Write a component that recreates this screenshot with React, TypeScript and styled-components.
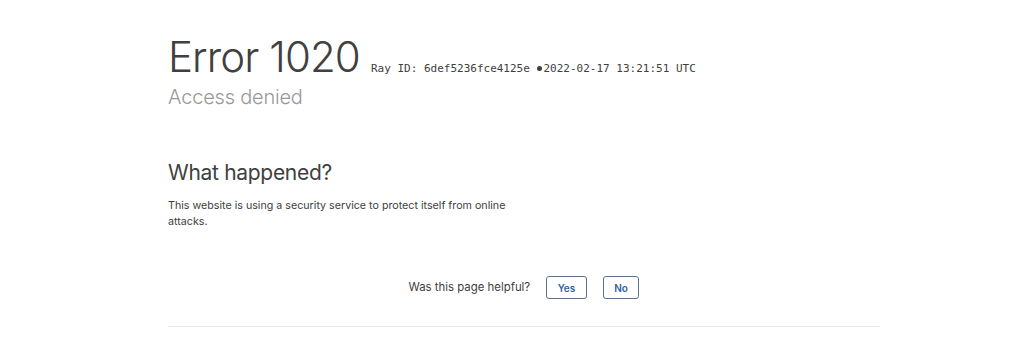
import React from 'react';
import styled, { createGlobalStyle } from 'styled-components';

const GlobalStyle = createGlobalStyle`
  html, body {
    margin: 0;
    padding: 0;
    background: #ffffff;
  }
  body {
    font-family: Inter, "Noto Sans", "Liberation Sans", sans-serif;
    color: #404040;
  }
`;

const ErrorPage = () => {
  return (
    <Page>
      <GlobalStyle />
      {/* header */}
      <Header>
        <TitleRow>
          <Title>Error 1020</Title>
          <RayInfo>
            Ray ID: 6def5236fce4125e <Dot />2022-02-17 13:21:51 UTC
          </RayInfo>
        </TitleRow>
        <Subtitle>Access denied</Subtitle>
      </Header>

      {/* details */}
      <Section>
        <SectionTitle>What happened?</SectionTitle>
        <Columns>
          <Column>
            <BodyText>
              This website is using a security service to protect itself from online attacks.
            </BodyText>
          </Column>
          <Column />
        </Columns>
      </Section>

      {/* feedback */}
      <Feedback>
        <FeedbackLabel>Was this page helpful?</FeedbackLabel>
        <FeedbackButton>Yes</FeedbackButton>
        <FeedbackButton>No</FeedbackButton>
      </Feedback>
      <Divider />
    </Page>
  );
};

export default ErrorPage;

const Page = styled.div`
  width: 712px;
  margin-left: 168px;
  padding-top: 36px;
`;

const Header = styled.header`
  display: flex;
  flex-direction: column;
  gap: 7px;
`;

const TitleRow = styled.div`
  display: flex;
  align-items: baseline;
  gap: 11px;
`;

const Title = styled.h1`
  margin: 0;
  font-size: 42px;
  line-height: 42px;
  font-weight: 300;
  letter-spacing: -0.9px;
  color: #404040;
`;

const RayInfo = styled.span`
  font-family: "DejaVu Sans Mono", "Liberation Mono", monospace;
  font-size: 11px;
  color: #404040;
  white-space: nowrap;
`;

const Dot = styled.span`
  display: inline-block;
  width: 5px;
  height: 5px;
  margin: 0 2px 1px 0;
  border-radius: 50%;
  background: #404040;
  vertical-align: middle;
`;

const Subtitle = styled.h2`
  margin: 0;
  font-size: 20px;
  line-height: 25px;
  font-weight: 300;
  letter-spacing: -0.2px;
  color: #999999;
`;

const Section = styled.section`
  margin-top: 49px;
`;

const SectionTitle = styled.h2`
  margin: 0 0 11px;
  font-size: 21px;
  line-height: 28px;
  font-weight: 400;
  letter-spacing: -0.3px;
  color: #404040;
`;

const Columns = styled.div`
  display: grid;
  grid-template-columns: 1fr 1fr;
`;

const Column = styled.div`
  padding-right: 6px;
`;

const BodyText = styled.p`
  margin: 0;
  font-size: 10.7px;
  line-height: 16px;
  color: #404040;
`;

const Feedback = styled.div`
  display: flex;
  justify-content: center;
  align-items: center;
  gap: 16px;
  margin-top: 46px;
`;

const FeedbackLabel = styled.span`
  font-size: 11.4px;
  line-height: 15px;
  color: #404040;
`;

const FeedbackButton = styled.button`
  height: 23px;
  padding: 0 10.5px;
  border: 1px solid #5a7390;
  border-radius: 3px;
  background: #ffffff;
  color: #2f62a0;
  font-family: Inter, "Noto Sans", sans-serif;
  font-size: 10px;
  font-weight: 600;
  cursor: pointer;
`;

const Divider = styled.hr`
  margin: 27px 0 0;
  border: 0;
  border-top: 1px solid #ebebeb;
`;
